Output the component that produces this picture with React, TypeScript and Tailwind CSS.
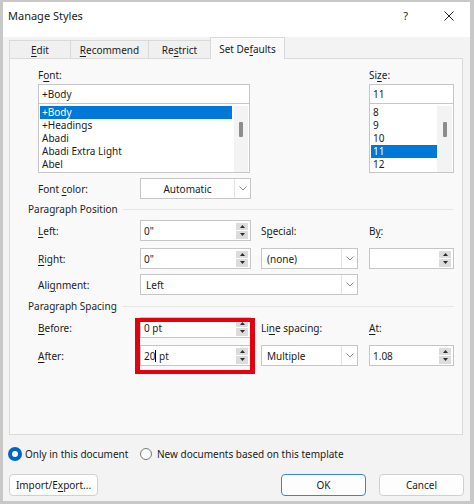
import React from "react";

// ==================== DATA ==================== //
const fonts = ["+Body", "+Headings", "Abadi", "Abadi Extra Light", "Abel"];
const sizes = ["8", "9", "10", "11", "12"];

// ==================== SMALL PARTS ==================== //
function U({ children }: { children: React.ReactNode }) {
  return <span className="underline underline-offset-[2px] decoration-[1px]">{children}</span>;
}

function Spinner() {
  return (
    <div className="flex flex-col gap-[1px] w-[12px] h-[16px] mr-[2px]">
      <div className="flex-1 bg-[#dcdcdc] flex items-center justify-center">
        <svg width="5" height="3" viewBox="0 0 5 3">
          <path d="M0 3 L2.5 0 L5 3Z" fill="#2b2b2b" />
        </svg>
      </div>
      <div className="flex-1 bg-[#dcdcdc] flex items-center justify-center">
        <svg width="5" height="3" viewBox="0 0 5 3">
          <path d="M0 0 L5 0 L2.5 3Z" fill="#2b2b2b" />
        </svg>
      </div>
    </div>
  );
}

function SpinInput({ value, cursor, w = "w-[111px]" }: { value: string; cursor?: boolean; w?: string }) {
  return (
    <div className={`flex items-center h-[21px] ${w} bg-white border border-[#c6c6c6]`}>
      <div className="flex-1 pl-[3px] flex items-center">
        {cursor ? (
          <>
            <span>20</span>
            <span className="w-px h-[12px] bg-black" />
            <span>&nbsp;pt</span>
          </>
        ) : (
          value
        )}
      </div>
      <Spinner />
    </div>
  );
}

function Select({ value, w, center }: { value: string; w: string; center?: boolean }) {
  return (
    <div className={`flex h-[21px] ${w} bg-white border border-[#c6c6c6]`}>
      <div className={`flex-1 flex items-center ${center ? "justify-center" : "pl-[5px]"}`}>{value}</div>
      <div className="w-[16px] border-l border-[#e2e2e2] flex items-center justify-center">
        <svg width="8" height="5" viewBox="0 0 8 5">
          <path d="M0.5 0.5 L4 4 L7.5 0.5" fill="none" stroke="#8a8a8a" strokeWidth="1" />
        </svg>
      </div>
    </div>
  );
}

function Scrollbar({ w }: { w: string }) {
  return (
    <div className={`${w} bg-[#f3f3f3] flex justify-center pt-[16px]`}>
      <div className="w-[4px] h-[15px] bg-[#8c8c8c] rounded-[1px]" />
    </div>
  );
}

function Header({ title }: { title: string }) {
  return (
    <div className="flex items-center h-[14px]">
      <span className="text-[#1f1f1f]">{title}</span>
      <div className="flex-1 h-px bg-[#e6e6e6] ml-[5px]" />
    </div>
  );
}

function Tab({ label, w, active }: { label: React.ReactNode; w: string; active?: boolean }) {
  return active ? (
    <div className={`${w} h-[22px] -mb-px relative z-10 bg-[#f9f9f9] border-t border-x border-[#d9d9d9] flex items-center justify-center`}>
      {label}
    </div>
  ) : (
    <div className={`${w} h-[18px] bg-[#f0f0f0] border-t border-l border-[#d9d9d9] flex items-center justify-center`}>
      {label}
    </div>
  );
}

// ==================== PRINCIPAL ==================== //
export default function App() {
  return (
    <div className="w-[474px] h-[504px] bg-[#c8c8c8] pl-[3px] pr-[4px] pt-[2px] pb-[3px] font-['Noto_Sans',sans-serif] text-[10px] text-[#1b1b1b] leading-[14px]">
      <div className="h-full bg-[#f3f3f3] flex flex-col">
        {/* title bar */}
        <div className="h-[35px] bg-white flex items-start pt-[7px] pl-[5px] pr-[16px]">
          <span className="text-[11px]">Manage Styles</span>
          <div className="ml-auto flex items-center gap-[36px] h-[14px]">
            <span className="text-[11px]">?</span>
            <svg width="10" height="10" viewBox="0 0 10 10">
              <path d="M0.5 0.5 L9.5 9.5 M9.5 0.5 L0.5 9.5" stroke="#222" strokeWidth="1" />
            </svg>
          </div>
        </div>

        {/* tabs */}
        <div className="h-[21px] flex items-end ml-[6px]">
          <Tab w="w-[61px]" label={<><U>E</U>dit</>} />
          <Tab w="w-[78px]" label={<><U>R</U>ecommend</>} />
          <Tab w="w-[62px]" label={<>Re<U>s</U>trict</>} />
          <Tab w="w-[75px]" active label={<>Set De<U>f</U>aults</>} />
        </div>

        {/* panel */}
        <div className="ml-[6px] w-[454px] h-[377px] bg-[#f9f9f9] border border-[#dadada] pl-[18px] pr-[8px] pt-[8px]">
          {/* font & size */}
          <div className="flex pl-[10px]">
            <div className="w-[212px] flex flex-col">
              <div className="h-[14px] mt-px">F<U>o</U>nt:</div>
              <div className="h-[20px] mt-[2px] bg-white border border-[#c6c6c6] flex items-center pl-[3px]">+Body</div>
              <div className="h-[69px] bg-white border border-t-0 border-[#c6c6c6] flex px-px pt-[2px]">
                <div className="w-[192px] flex flex-col">
                  {fonts.map((f, i) => (
                    <div
                      key={f}
                      className={`h-[13px] leading-[13px] pl-[2px] ${i === 0 ? "bg-[#0078d7] text-white" : ""}`}
                    >
                      {f}
                    </div>
                  ))}
                </div>
                <div className="ml-auto flex">
                  <Scrollbar w="w-[14px]" />
                </div>
              </div>
            </div>
            <div className="w-[85px] ml-auto flex flex-col">
              <div className="h-[14px] mt-px">Si<U>z</U>e:</div>
              <div className="h-[20px] mt-[2px] bg-white border border-[#c6c6c6] flex items-center pl-[3px]">11</div>
              <div className="h-[69px] bg-white border border-t-0 border-[#c6c6c6] flex px-px pt-[2px]">
                <div className="w-[66px] flex flex-col">
                  {sizes.map((s) => (
                    <div
                      key={s}
                      className={`h-[13px] leading-[13px] pl-[2px] ${s === "11" ? "bg-[#0078d7] text-white" : ""}`}
                    >
                      {s}
                    </div>
                  ))}
                </div>
                <div className="ml-auto flex">
                  <Scrollbar w="w-[15px]" />
                </div>
              </div>
            </div>
          </div>

          {/* font color */}
          <div className="flex items-center pl-[10px] mt-[5px]">
            <div className="w-[102px]">Font <U>c</U>olor:</div>
            <Select value="Automatic" w="w-[111px]" center />
          </div>

          {/* paragraph position */}
          <div className="mt-[3px]">
            <Header title="Paragraph Position" />
          </div>
          <div className="flex items-center pl-[10px] mt-[4px] h-[21px]">
            <div className="w-[102px]"><U>L</U>eft:</div>
            <SpinInput value={'0"'} />
            <div className="ml-[10px] w-[97px]">S<U>p</U>ecial:</div>
            <div className="ml-[11px] w-[85px]">B<U>y</U>:</div>
          </div>
          <div className="flex items-center pl-[10px] mt-[7px] h-[21px]">
            <div className="w-[102px]"><U>R</U>ight:</div>
            <SpinInput value={'0"'} />
            <div className="ml-[10px]">
              <Select value="(none)" w="w-[97px]" />
            </div>
            <div className="ml-[11px]">
              <SpinInput value="" w="w-[85px]" />
            </div>
          </div>
          <div className="flex items-center pl-[10px] mt-[5px] h-[21px]">
            <div className="w-[102px]">Ali<U>g</U>nment:</div>
            <Select value="Left" w="w-[218px]" />
          </div>

          {/* paragraph spacing */}
          <div className="mt-[4px]">
            <Header title="Paragraph Spacing" />
          </div>
          <div className="relative">
            <div className="flex items-center pl-[10px] mt-[4px] h-[21px]">
              <div className="w-[102px]"><U>B</U>efore:</div>
              <SpinInput value="0 pt" />
              <div className="ml-[10px] w-[97px]">Li<U>n</U>e spacing:</div>
              <div className="ml-[11px] w-[85px]"><U>A</U>t:</div>
            </div>
            <div className="flex items-center pl-[10px] mt-[7px] h-[21px]">
              <div className="w-[102px]"><U>A</U>fter:</div>
              <SpinInput value="20 pt" cursor />
              <div className="ml-[10px]">
                <Select value="Multiple" w="w-[97px]" />
              </div>
              <div className="ml-[11px]">
                <SpinInput value="1.08" w="w-[85px]" />
              </div>
            </div>
            {/* red highlight annotation */}
            <div className="absolute left-[107px] top-px w-[120px] h-[56px] border-x-[5px] border-y-[4px] border-[#e3000f]" />
          </div>
        </div>

        {/* radios */}
        <div className="flex items-center h-[14px] mt-[12px] ml-[5px]">
          <div className="w-[132px] flex items-center">
            <div className="w-[14px] h-[14px] rounded-full bg-[#0067c0] flex items-center justify-center">
              <div className="w-[6px] h-[6px] rounded-full bg-white" />
            </div>
            <span className="ml-[3px]">Only in this document</span>
          </div>
          <div className="w-[12px] h-[12px] rounded-full border border-[#7a7a7a] bg-[#fbfbfb]" />
          <span className="ml-[5px]">New documents based on this template</span>
        </div>

        {/* buttons */}
        <div className="flex h-[22px] mt-[13px] ml-[6px] mr-[6px]">
          <div className="w-[89px] bg-[#fdfdfd] border border-[#d0d0d0] rounded-[4px] flex items-center justify-center">
            Import/E<U>x</U>port...
          </div>
          <div className="ml-auto w-[85px] bg-[#fdfdfd] border border-[#3b86c9] rounded-[4px] flex items-center justify-center">
            OK
          </div>
          <div className="ml-[13px] w-[85px] bg-[#fdfdfd] border border-[#d0d0d0] rounded-[4px] flex items-center justify-center">
            Cancel
          </div>
        </div>
      </div>
    </div>
  );
}
